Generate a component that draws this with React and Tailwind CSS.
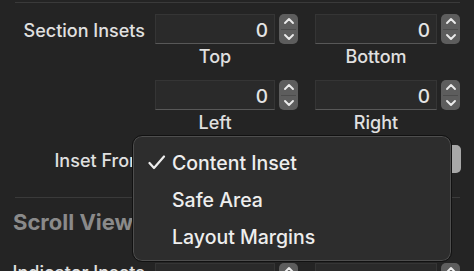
import React from "react";

function Stepper() {
  return (
    <div className="w-[19px] h-[30px] rounded-[5px] bg-[#5d5d5d] flex flex-col items-center justify-between py-[3px] shrink-0">
      <svg width="12" height="8" viewBox="0 0 12 8">
        <polyline points="2,6 6,2 10,6" fill="none" stroke="#ebebeb" strokeWidth="1.9" strokeLinecap="round" strokeLinejoin="round" />
      </svg>
      <div className="w-[15px] h-px bg-[#4c4c4c]" />
      <svg width="12" height="8" viewBox="0 0 12 8">
        <polyline points="2,2 6,6 10,2" fill="none" stroke="#ebebeb" strokeWidth="1.9" strokeLinecap="round" strokeLinejoin="round" />
      </svg>
    </div>
  );
}

function Field({ w }) {
  return (
    <div className={`${w} h-[30px] bg-[#2a2a2a] border border-[#353535] border-b-[#585858] flex items-center justify-end pr-[6px] pt-[2px] text-[19px] text-[#e4e4e4] shrink-0`}>
      0
    </div>
  );
}

function InsetRow({ label, labelClass = "pt-[3px]" }) {
  return (
    <div className="flex items-center h-[30px]">
      <div className={`w-[145px] text-right text-[18px] ${labelClass} text-[#e0e0e0] shrink-0 whitespace-nowrap`}>{label}</div>
      <div className="ml-[10px]"><Field w="w-[120px]" /></div>
      <div className="ml-[4px]"><Stepper /></div>
      <div className="ml-[17px]"><Field w="w-[122px]" /></div>
      <div className="ml-[4px]"><Stepper /></div>
    </div>
  );
}

function SubLabels({ a, b }) {
  return (
    <div className="flex h-[22px] items-center pt-[3px] text-[18px] text-[#e0e0e0]">
      <div className="ml-[155px] w-[120px] text-center">{a}</div>
      <div className="ml-[40px] w-[122px] text-center">{b}</div>
    </div>
  );
}

export default function App() {
  return (
    <div className="w-[474px] h-[271px] overflow-hidden bg-[#242424] relative font-['Inter',sans-serif] font-medium leading-none">
      <div className="pt-[2px] pl-[15px] pr-[14px]">
        <div className="h-px bg-[#3a3a3a]" />
      </div>
      <div className="mt-[11px]">
        <InsetRow label="Section Insets" />
      </div>
      <SubLabels a="Top" b="Bottom" />
      <div className="mt-[14px]">
        <InsetRow label="" />
      </div>
      <SubLabels a="Left" b="Right" />
      <div className="mt-[13px] flex items-center h-[28px]">
        <div className="w-[145px] text-right text-[18px] pt-[4px] text-[#e0e0e0] whitespace-nowrap">Inset From</div>
        <div className="ml-[10px] w-[306px] h-[28px] rounded-[5px] bg-[#3a3a3a] flex justify-end">
          <div className="w-[20px] h-full rounded-[5px] bg-[#a8a8a8]" />
        </div>
      </div>
      <div className="mt-[24px] pl-[15px] pr-[14px]">
        <div className="h-px bg-[#3a3a3a]" />
      </div>
      <div className="mt-[11px] h-[26px] flex items-center pl-[13px] text-[22px] font-bold text-[#8a8a8a]">
        Scroll View
      </div>
      <div className="mt-[28px]">
        <InsetRow label="Indicator Insets" labelClass="pb-[11px]" />
      </div>

      <div className="absolute left-[132px] top-[135px] w-[320px] h-[127px] rounded-[10px] border border-[#111111] bg-[#2d2d2d] shadow-[inset_0_0_0_1px_#4e4e4e] pt-[8px] text-[19.5px] text-[#eeeeee]">
        <div className="h-[37px] flex items-center">
          <svg className="ml-[15px]" width="18" height="15" viewBox="0 0 18 15">
            <polyline points="1.5,8 6,13 16,1.5" fill="none" stroke="#eeeeee" strokeWidth="2.2" strokeLinecap="round" strokeLinejoin="round" />
          </svg>
          <span className="ml-[6px] pt-[2px]">Content Inset</span>
        </div>
        <div className="h-[37px] flex items-center pt-[2px] pl-[39px]">Safe Area</div>
        <div className="h-[37px] flex items-center pt-[2px] pl-[39px]">Layout Margins</div>
      </div>
    </div>
  );
}
